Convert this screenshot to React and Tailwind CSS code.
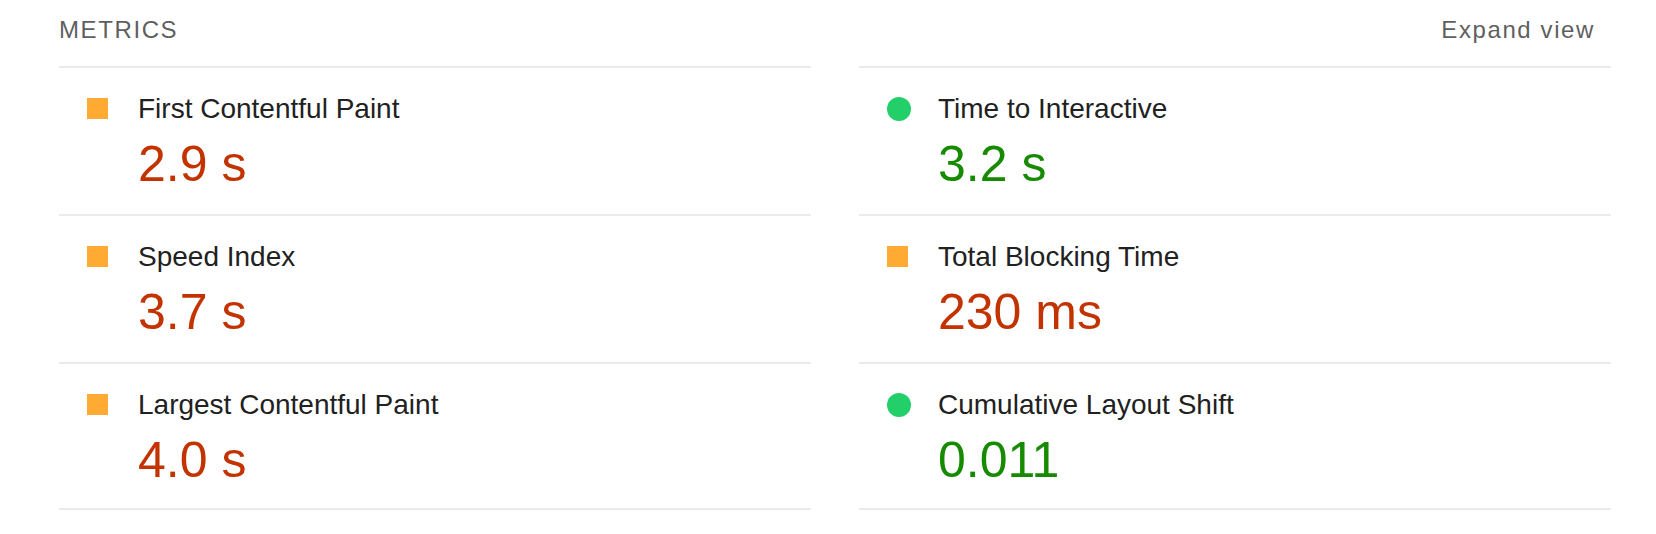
import React from "react";

const metrics = [
  { id: "fcp", label: "First Contentful Paint", value: "2.9 s", rating: "average" },
  { id: "tti", label: "Time to Interactive", value: "3.2 s", rating: "pass" },
  { id: "si", label: "Speed Index", value: "3.7 s", rating: "average" },
  { id: "tbt", label: "Total Blocking Time", value: "230 ms", rating: "average" },
  { id: "lcp", label: "Largest Contentful Paint", value: "4.0 s", rating: "average" },
  { id: "cls", label: "Cumulative Layout Shift", value: "0.011", rating: "pass" },
];

function ScoreIcon({ rating }) {
  if (rating === "pass") {
    return <span className="block h-[24px] w-[24px] rounded-full bg-[#22cf69]" />;
  }
  return <span className="block h-[21px] w-[21px] bg-[#ffaa33]" />;
}

function Metric({ metric, last }) {
  return (
    <div
      className={`h-[148px] border-t-2 border-[#ebebeb] pt-[20px] ${
        last ? "border-b-2" : ""
      }`}
    >
      <div className="flex items-center">
        <div className="flex w-[79px] shrink-0 items-center pl-[28px]">
          <ScoreIcon rating={metric.rating} />
        </div>
        <span className="text-[28px] leading-[41px] text-[#212121]">{metric.label}</span>
      </div>
      <div
        className={`mt-[7px] pl-[79px] text-[50px] leading-[56px] ${
          metric.rating === "pass" ? "text-[#168a00]" : "text-[#c33300]"
        }`}
      >
        {metric.value}
      </div>
    </div>
  );
}

export default function App() {
  return (
    <div className="min-h-screen bg-white pl-[59px] pr-[45px] font-['Liberation_Sans',Arial,sans-serif]">
      {/* Header */}
      <div className="flex items-start justify-between pt-[14px] pb-[20px] text-[24px] leading-[32px] tracking-[1.6px] text-[#5f5f5f]">
        <span className="uppercase">Metrics</span>
        <span className="pr-[16px]">Expand view</span>
      </div>

      {/* Metrics grid */}
      <div className="grid grid-cols-2 gap-x-[48px]">
        {metrics.map((m, i) => (
          <Metric key={m.id} metric={m} last={i >= metrics.length - 2} />
        ))}
      </div>
    </div>
  );
}
